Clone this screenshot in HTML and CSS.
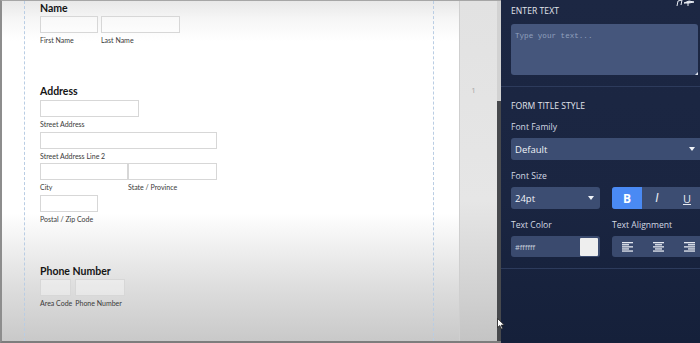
FILE: index.html
```html
<!DOCTYPE html>
<html lang="en">
<head>
<meta charset="utf-8">
<title>Form Builder</title>
<link rel="stylesheet" href="styles.css">
</head>
<body>
<div class="app">
  <div class="workspace">
    <div class="canvas">
      <div class="page">
        <section class="group group-name">
          <h2 class="group-title">Name</h2>
          <div class="row">
            <div class="field"><div class="input w58"></div><div class="sub">First Name</div></div>
            <div class="field"><div class="input w79"></div><div class="sub">Last Name</div></div>
          </div>
        </section>
        <section class="group group-address">
          <h2 class="group-title">Address</h2>
          <div class="field"><div class="input w99"></div><div class="sub">Street Address</div></div>
          <div class="field"><div class="input w177"></div><div class="sub">Street Address Line 2</div></div>
          <div class="row tight">
            <div class="field"><div class="input w88"></div><div class="sub">City</div></div>
            <div class="field"><div class="input w89"></div><div class="sub">State / Province</div></div>
          </div>
          <div class="field"><div class="input w58"></div><div class="sub">Postal / Zip Code</div></div>
        </section>
        <section class="group group-phone">
          <h2 class="group-title">Phone Number</h2>
          <div class="row">
            <div class="field"><div class="input w31"></div><div class="sub">Area Code</div></div>
            <div class="field"><div class="input w50"></div><div class="sub">Phone Number</div></div>
          </div>
        </section>
      </div>
    </div>
    <div class="gutter"><span class="page-num">1</span></div>
    <div class="scrollbar"><div class="track"></div><div class="thumb"></div></div>
  </div>

  <aside class="panel">
    <div class="panel-section first">
      <div class="section-title">ENTER TEXT</div>
      <div class="textarea"><span class="placeholder">Type your text...</span><span class="resize"></span></div>
    </div>
    <div class="panel-section second">
      <div class="section-title">FORM TITLE STYLE</div>
      <div class="ctl-label lbl-family">Font Family</div>
      <div class="select full"><span>Default</span><span class="caret"></span></div>
      <div class="grid2">
        <div class="ctl-label">Font Size</div>
        <div></div>
        <div class="select"><span>24pt</span><span class="caret"></span></div>
        <div class="btn-group">
          <div class="tbtn active b">B</div>
          <div class="tbtn i">I</div>
          <div class="tbtn u">U</div>
        </div>
        <div class="ctl-label lbl-row">Text Color</div>
        <div class="ctl-label lbl-row">Text Alignment</div>
        <div class="color-input"><span class="hex">#ffffff</span><span class="swatch"></span></div>
        <div class="align-group">
          <div class="abtn">
            <svg width="11" height="10" viewBox="0 0 11 10"><rect x="0" y="0" width="11" height="1.3" fill="#e4e8f0"/><rect x="0" y="2.1" width="7" height="1.3" fill="#e4e8f0"/><rect x="0" y="4.2" width="11" height="1.3" fill="#e4e8f0"/><rect x="0" y="6.3" width="7" height="1.3" fill="#e4e8f0"/><rect x="0" y="8.4" width="11" height="1.3" fill="#e4e8f0"/></svg>
          </div>
          <div class="abtn">
            <svg width="11" height="10" viewBox="0 0 11 10"><rect x="0" y="0" width="11" height="1.3" fill="#e4e8f0"/><rect x="2" y="2.1" width="7" height="1.3" fill="#e4e8f0"/><rect x="0" y="4.2" width="11" height="1.3" fill="#e4e8f0"/><rect x="2" y="6.3" width="7" height="1.3" fill="#e4e8f0"/><rect x="0" y="8.4" width="11" height="1.3" fill="#e4e8f0"/></svg>
          </div>
          <div class="abtn">
            <svg width="11" height="10" viewBox="0 0 11 10"><rect x="0" y="0" width="11" height="1.3" fill="#e4e8f0"/><rect x="4" y="2.1" width="7" height="1.3" fill="#e4e8f0"/><rect x="0" y="4.2" width="11" height="1.3" fill="#e4e8f0"/><rect x="4" y="6.3" width="7" height="1.3" fill="#e4e8f0"/><rect x="0" y="8.4" width="11" height="1.3" fill="#e4e8f0"/></svg>
          </div>
        </div>
      </div>
    </div>
    <svg class="corner-icons" width="20" height="7" viewBox="0 0 20 7">
      <path d="M1 6 L2 1 L6 0 L5 5" stroke="#e8ecf3" stroke-width="1" fill="none"/>
      <path d="M8 3 L13 1 L18 2 L13 3 Z M12 3 L12 6" stroke="#e8ecf3" stroke-width="1" fill="#e8ecf3"/>
    </svg>
  </aside>

  <svg class="cursor" width="8" height="12" viewBox="0 0 8 12">
    <path d="M0.5 0.5 L0.5 9.5 L2.8 7.5 L4.3 11 L5.6 10.4 L4.2 7.1 L7.3 7.1 Z" fill="#fff" stroke="#222" stroke-width="0.8"/>
  </svg>
</div>
</body>
</html>
```

FILE: styles.css
```css
* { box-sizing: border-box; margin: 0; padding: 0; }

html, body { width: 700px; height: 343px; overflow: hidden; }

body {
  font-family: "Lato", "Noto Sans", sans-serif;
  background: #1b2642;
}

.app {
  position: relative;
  display: flex;
  width: 700px;
  height: 343px;
}

/* ---------- left workspace ---------- */
.workspace {
  display: flex;
  width: 501px;
  height: 343px;
  border-top: 1px solid #a6a6a6;
  border-left: 2px solid #8d8d8d;
  border-bottom: 2px solid #7d7d7d;
}

.canvas {
  width: 457px;
  height: 100%;
  background: linear-gradient(to bottom,
    #e8e8e8 0px, #f6f6f6 18px, #ffffff 40px,
    #ffffff 212px, #f0f0f0 245px, #dedede 285px, #c9c9c9 340px);
  padding-left: 22px;
}

.page {
  width: 410px;
  height: 100%;
  border-left: 1px dashed #b9cde4;
  border-right: 1px dashed #b9cde4;
  padding-left: 15px;
}

.group-title {
  font-size: 10.5px;
  font-weight: 700;
  line-height: 14px;
  color: #151515;
  margin-bottom: 1px;
}

.group-address { margin-top: 37px; }
.group-phone { margin-top: 39px; }
.group-address .group-title { margin-bottom: 2px; }

.row { display: flex; gap: 3px; }
.row.tight { gap: 0; }

.field { display: flex; flex-direction: column; margin-bottom: 1.4px; }

.input {
  height: 17px;
  border: 1px solid #d7d7d7;
  background: rgba(255, 255, 255, 0.35);
}

.w31 { width: 31px; }
.w50 { width: 50px; }
.w58 { width: 58px; }
.w79 { width: 79px; }
.w88 { width: 88px; }
.w89 { width: 89px; }
.w99 { width: 99px; }
.w177 { width: 177px; }

.sub {
  font-size: 7px;
  line-height: 11px;
  margin-top: 2px;
  color: #3a3a3a;
  white-space: nowrap;
}

.gutter {
  width: 38px;
  height: 100%;
  border-left: 1px solid #cfcfcf;
  background: linear-gradient(to bottom, #e2e2e2 0px, #e6e6e6 200px, #cfcfcf 300px, #c4c4c4 340px);
  display: flex;
  justify-content: center;
  padding-top: 83px;
  padding-right: 10px;
}

.page-num {
  font-family: "Open Sans", sans-serif;
  font-size: 8px;
  line-height: 12px;
  color: #a8a8a8;
}

.scrollbar {
  width: 4px;
  height: 100%;
  display: flex;
  flex-direction: column;
}
.track { height: 100px; background: #d2d2d2; }
.thumb { flex: 1; background: #47494d; }

/* ---------- right panel ---------- */
.panel {
  position: relative;
  width: 199px;
  height: 343px;
  background: linear-gradient(to bottom, #1c2743 0px, #1a2541 200px, #15203a 343px);
  font-family: "Open Sans", "Noto Sans", sans-serif;
  color: #d3d9e4;
  overflow: hidden;
}

.panel-section {
  padding-left: 10px;
  border-bottom: 1px solid #2d3b5c;
}

.panel-section.first {
  padding-top: 5px;
  height: 87px;
}

.panel-section.second {
  padding-top: 13px;
  height: 182px;
}

.section-title {
  font-size: 8.6px;
  line-height: 12px;
  color: #e1e5ec;
  letter-spacing: 0.05px;
}

.textarea {
  position: relative;
  margin-top: 7px;
  width: 187px;
  height: 51px;
  background: #45567c;
  border-radius: 3px;
  padding: 5px 4px;
  font-size: 8px;
  line-height: 12px;
}

.placeholder {
  font-family: "Liberation Mono", "DejaVu Sans Mono", monospace;
  font-size: 7.6px;
  line-height: 12px;
  color: #91a0bd;
}

.resize {
  position: absolute;
  right: 0;
  bottom: 0;
  width: 0;
  height: 0;
  border-left: 3px solid transparent;
  border-bottom: 3px solid #dfe4ee;
}

.ctl-label {
  font-size: 8.6px;
  line-height: 12px;
  color: #d3d9e4;
}

.lbl-family { margin-top: 9px; }

.select {
  display: flex;
  align-items: center;
  justify-content: space-between;
  height: 22px;
  background: #3c4d72;
  border-radius: 3px;
  padding: 0 6px 0 4px;
  font-size: 9.5px;
  color: #f0f3f8;
}

.select.full {
  margin-top: 5px;
  width: 189px;
  border-radius: 3px 0 0 3px;
  padding-right: 5px;
}

.caret {
  width: 0;
  height: 0;
  border-left: 3.5px solid transparent;
  border-right: 3.5px solid transparent;
  border-top: 4px solid #f0f3f8;
}

.grid2 {
  display: grid;
  grid-template-columns: 89px 88px;
  column-gap: 12px;
  margin-top: 10px;
}

.grid2 > .ctl-label:first-child { margin-bottom: 5px; }
.lbl-row { margin-top: 10px; margin-bottom: 5px; }

.btn-group {
  display: flex;
  height: 22px;
  background: #3c4d72;
  border-radius: 3px 0 0 3px;
  overflow: hidden;
}

.tbtn {
  flex: 0 0 30px;
  display: flex;
  align-items: center;
  justify-content: center;
  font-size: 11px;
  color: #e8ecf3;
}

.tbtn.active { background: #4a8af4; color: #fff; }
.tbtn.b { font-weight: 700; font-size: 12px; }
.tbtn.i { font-style: italic; font-family: "Liberation Sans", sans-serif; font-size: 12px; }
.tbtn.u { text-decoration: underline; font-size: 11px; }

.color-input {
  display: flex;
  align-items: center;
  justify-content: space-between;
  height: 21px;
  background: #3a4a6e;
  border-radius: 3px;
  padding: 0 2px 0 4px;
}

.hex {
  font-size: 7.5px;
  color: #c9d0dd;
}

.swatch {
  width: 18px;
  height: 18px;
  background: #eeeeee;
  border-radius: 1px;
}

.align-group {
  display: flex;
  height: 21px;
  background: #3a4a6e;
  border-radius: 3px 0 0 3px;
  overflow: hidden;
}

.abtn {
  flex: 0 0 31px;
  display: flex;
  align-items: center;
  justify-content: center;
}

.corner-icons {
  position: absolute;
  top: 0;
  right: 4px;
}

.cursor {
  position: absolute;
  left: 497px;
  top: 318px;
}
```
